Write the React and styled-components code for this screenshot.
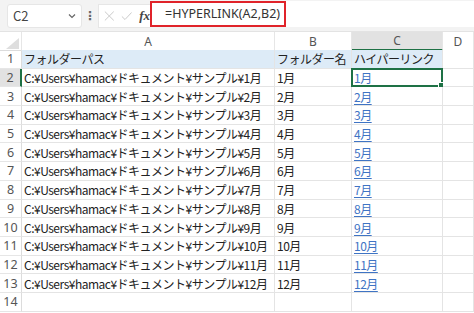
import React from 'react';
import styled, { createGlobalStyle } from 'styled-components';

const GlobalStyle = createGlobalStyle`
  html, body { margin: 0; padding: 0; background: #fff; }
  body { font-family: "Noto Sans CJK JP", "Noto Sans", sans-serif; overflow: hidden; }
`;

const FONT = `"Noto Sans CJK JP", "Noto Sans", sans-serif`;
const COLS = '22px 253px 77px 91px 1fr';

const Sheet = styled.div`
  width: 474px;
  height: 313px;
  overflow: hidden;
  background: #fff;
`;

const FormulaBar = styled.div`
  display: flex;
  align-items: center;
  height: 32px;
  padding: 0 0 0 7px;
  background: #f3f3f3;
  border-bottom: 1px solid #e3e3e3;
  box-sizing: border-box;
`;

const NameBox = styled.div`
  display: flex;
  align-items: center;
  justify-content: space-between;
  width: 75px;
  height: 24px;
  padding: 0 4px 0 5px;
  box-sizing: border-box;
  background: #fff;
  border: 1px solid #e6e6e6;
  border-radius: 3px;
  font: 13px ${FONT};
  color: #444;
`;

const Dots = styled.div`
  width: 16px;
  text-align: center;
  color: #666;
  font: bold 12px "DejaVu Sans", sans-serif;
`;

const IconBox = styled.div`
  display: flex;
  align-items: center;
  gap: 6px;
  width: 52px;
  height: 24px;
  padding-left: 5px;
  box-sizing: border-box;
  background: #fff;
  border: 1px solid #e6e6e6;
  border-right: none;
`;

const Fx = styled.span`
  font: italic bold 13px "Liberation Serif", serif;
  color: #444;
  margin-left: 1px;
`;

const FormulaField = styled.div`
  flex: 1;
  display: flex;
  align-items: center;
  height: 26px;
  margin-top: -4px;
  background: #fff;
`;

const Highlight = styled.div`
  display: flex;
  align-items: center;
  width: 136px;
  height: 26px;
  box-sizing: border-box;
  border: 2px solid #e0232a;
  padding-left: 13px;
  font: 12.5px "Noto Sans", sans-serif;
  color: #333;
  white-space: nowrap;
`;

const Row = styled.div`
  display: grid;
  grid-template-columns: ${COLS};
  height: ${p => p.$h || '18.7px'};
`;

const Corner = styled.div`
  position: relative;
  border-bottom: 1px solid #dcdcdc;
  border-right: 1px solid #e6e6e6;
`;

const Triangle = styled.div`
  position: absolute;
  right: 2px;
  bottom: 1px;
  width: 0;
  height: 0;
  border-left: 13px solid transparent;
  border-bottom: 11px solid #dedede;
`;

const ColHead = styled.div`
  display: flex;
  align-items: center;
  justify-content: center;
  font: 12px "Noto Sans", sans-serif;
  color: #555;
  background: ${p => (p.$active ? '#e2e2e2' : '#fff')};
  border-right: 1px solid #e6e6e6;
  border-bottom: ${p => (p.$active ? '2px solid #1e7145' : '1px solid #dcdcdc')};
  box-sizing: border-box;
`;

const RowHead = styled.div`
  display: flex;
  align-items: center;
  justify-content: center;
  font: 12.5px "Noto Sans", sans-serif;
  color: #555;
  background: ${p => (p.$active ? '#e2e2e2' : '#fff')};
  border-right: ${p => (p.$active ? '2px solid #1e7145' : '1px solid #dcdcdc')};
  border-bottom: 1px solid #e6e6e6;
  box-sizing: border-box;
`;

const Cell = styled.div`
  position: relative;
  display: flex;
  align-items: center;
  padding-left: 2px;
  font: 12px ${FONT};
  letter-spacing: -0.5px;
  color: #222;
  white-space: nowrap;
  overflow: visible;
  background: ${p => (p.$fill ? '#ddebf7' : '#fff')};
  border-right: 1px solid #e4e4e4;
  border-bottom: 1px solid #e4e4e4;
  box-sizing: border-box;
`;

const Selected = styled.div`
  position: absolute;
  left: -1px;
  top: -1px;
  right: -1px;
  bottom: -1px;
  border: 2px solid #1e7145;
  pointer-events: none;
`;

const Handle = styled.div`
  position: absolute;
  right: -4px;
  bottom: -4px;
  width: 5px;
  height: 5px;
  background: #1e7145;
  border: 1px solid #fff;
`;

const Link = styled.span`
  color: #3f74c4;
  text-decoration: underline;
  text-underline-offset: 2px;
`;

const Chevron = () => (
  <svg width="10" height="10" viewBox="0 0 10 10">
    <path d="M2 3.5 L5 6.5 L8 3.5" fill="none" stroke="#666" strokeWidth="1.2" />
  </svg>
);

const Cross = () => (
  <svg width="12" height="12" viewBox="0 0 12 12">
    <path d="M1 1 L11 11 M11 1 L1 11" stroke="#c8c8c8" strokeWidth="1.1" />
  </svg>
);

const Check = () => (
  <svg width="13" height="12" viewBox="0 0 13 12">
    <path d="M1 6.5 L4.5 10 L12 2" fill="none" stroke="#c8c8c8" strokeWidth="1.1" />
  </svg>
);

const months = Array.from({ length: 12 }, (_, i) => `${i + 1}月`);

export default function App() {
  return (
    <Sheet>
      <GlobalStyle />
      <FormulaBar>
        <NameBox>
          C2
          <Chevron />
        </NameBox>
        <Dots>⋮</Dots>
        <IconBox>
          <Cross />
          <Check />
          <Fx>fx</Fx>
        </IconBox>
        <FormulaField>
          <Highlight>=HYPERLINK(A2,B2)</Highlight>
        </FormulaField>
      </FormulaBar>

      <Row $h="18px">
        <Corner>
          <Triangle />
        </Corner>
        <ColHead>A</ColHead>
        <ColHead>B</ColHead>
        <ColHead $active>C</ColHead>
        <ColHead>D</ColHead>
      </Row>

      <Row>
        <RowHead>1</RowHead>
        <Cell $fill>フォルダーパス</Cell>
        <Cell $fill>フォルダー名</Cell>
        <Cell $fill>ハイパーリンク</Cell>
        <Cell />
      </Row>

      {months.map((m, i) => (
        <Row key={m}>
          <RowHead $active={i === 0}>{i + 2}</RowHead>
          <Cell>C:¥Users¥hamac¥ドキュメント¥サンプル¥{m}</Cell>
          <Cell>{m}</Cell>
          <Cell>
            <Link>{m}</Link>
            {i === 0 && (
              <Selected>
                <Handle />
              </Selected>
            )}
          </Cell>
          <Cell />
        </Row>
      ))}

      <Row>
        <RowHead>14</RowHead>
        <Cell />
        <Cell />
        <Cell />
        <Cell />
      </Row>
    </Sheet>
  );
}
